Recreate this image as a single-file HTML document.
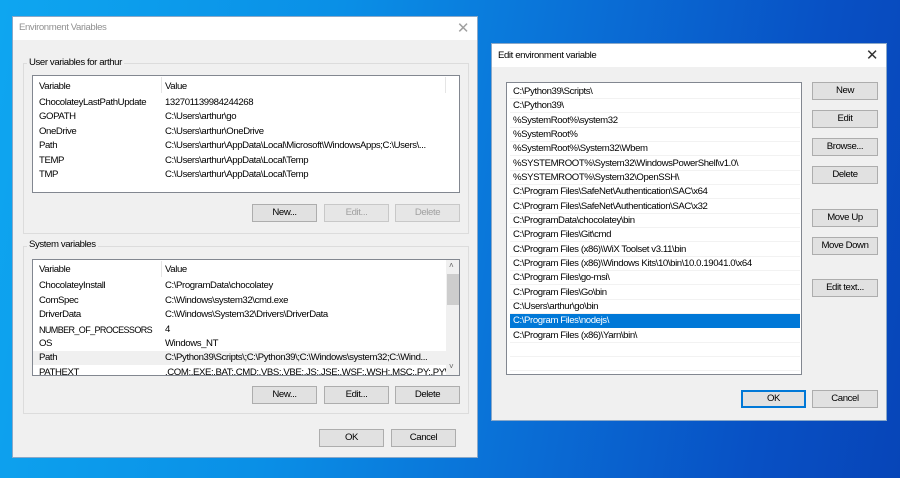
<!DOCTYPE html>
<html><head><meta charset="utf-8"><style>
*{box-sizing:border-box;margin:0;padding:0}
body{width:900px;height:478px;overflow:hidden;position:relative;font-family:"Liberation Sans",sans-serif;font-size:9.6px;letter-spacing:-0.4px;color:#000;
background:linear-gradient(100deg,#0ea6f0 0%,#0a8fe6 35%,#0a6fd6 60%,#0850c4 85%,#0745b8 100%)}
.a{position:absolute}
.dlg{position:absolute;background:#f0f0f0;border:1px solid #8aa8c8}
.tb{position:absolute;left:0;top:0;right:0;background:#fff}
.btn{position:absolute;background:#e1e1e1;border:1px solid #adadad;text-align:center;line-height:16px;height:18px}
.dis{color:#a0a0a0;background:#e6e6e6;border-color:#c8c8c8}
.grp{position:absolute;border:1px solid #dcdcdc}
.lbl{position:absolute;background:#f0f0f0;padding:0 2px;line-height:12px}
.lst{position:absolute;background:#fff;border:1px solid #828790;overflow:hidden}
.row{position:absolute;left:0;height:14px;line-height:14px;white-space:nowrap}
.r{position:absolute;left:3px;width:290px;height:14px;line-height:13px;padding-left:3px;border-bottom:1px solid #f2f2f2;white-space:nowrap}
</style></head><body>

<!-- Left dialog -->
<div class="dlg" style="left:12px;top:16px;width:466px;height:442px">
 <div class="tb" style="height:23px"><span class="a" style="left:6px;top:5px;color:#909090">Environment Variables</span>
  <span class="a" style="right:8px;top:2px;font-size:15px;color:#a0a0a0">✕</span></div>
 <div class="grp" style="left:10px;top:46px;width:446px;height:171px"></div>
 <span class="lbl" style="left:14px;top:40px">User variables for arthur</span>
 <div class="lst" style="left:19px;top:58px;width:428px;height:118px">
  <div class="a" style="left:128px;top:1px;width:1px;height:16px;background:#e5e5e5"></div>
  <div class="a" style="left:412px;top:1px;width:1px;height:16px;background:#e5e5e5"></div>
  <div class="row" style="left:6px;top:4px">Variable</div><div class="row" style="left:132px;top:4px">Value</div>
  <div class="row" style="left:6px;top:20px">ChocolateyLastPathUpdate</div><div class="row" style="left:132px;top:20px">132701139984244268</div>
  <div class="row" style="left:6px;top:34px">GOPATH</div><div class="row" style="left:132px;top:34px">C:\Users\arthur\go</div>
  <div class="row" style="left:6px;top:49px">OneDrive</div><div class="row" style="left:132px;top:49px">C:\Users\arthur\OneDrive</div>
  <div class="row" style="left:6px;top:63px">Path</div><div class="row" style="left:132px;top:63px">C:\Users\arthur\AppData\Local\Microsoft\WindowsApps;C:\Users\...</div>
  <div class="row" style="left:6px;top:78px">TEMP</div><div class="row" style="left:132px;top:78px">C:\Users\arthur\AppData\Local\Temp</div>
  <div class="row" style="left:6px;top:92px">TMP</div><div class="row" style="left:132px;top:92px">C:\Users\arthur\AppData\Local\Temp</div>
 </div>
 <div class="btn" style="left:239px;top:187px;width:65px">New...</div>
 <div class="btn dis" style="left:311px;top:187px;width:65px">Edit...</div>
 <div class="btn dis" style="left:382px;top:187px;width:65px">Delete</div>

 <div class="grp" style="left:10px;top:229px;width:446px;height:168px"></div>
 <span class="lbl" style="left:14px;top:222px">System variables</span>
 <div class="lst" style="left:19px;top:242px;width:428px;height:117px">
  <div class="a" style="left:128px;top:1px;width:1px;height:16px;background:#e5e5e5"></div>
  <div class="a" style="left:0;top:91px;width:413px;height:14px;background:#f0f0f0"></div>
  <div class="row" style="left:6px;top:3px">Variable</div><div class="row" style="left:132px;top:3px">Value</div>
  <div class="row" style="left:6px;top:19px">ChocolateyInstall</div><div class="row" style="left:132px;top:19px">C:\ProgramData\chocolatey</div>
  <div class="row" style="left:6px;top:34px">ComSpec</div><div class="row" style="left:132px;top:34px">C:\Windows\system32\cmd.exe</div>
  <div class="row" style="left:6px;top:48px">DriverData</div><div class="row" style="left:132px;top:48px">C:\Windows\System32\Drivers\DriverData</div>
  <div class="row" style="left:6px;top:63px;font-size:9px;letter-spacing:-0.6px">NUMBER_OF_PROCESSORS</div><div class="row" style="left:132px;top:63px">4</div>
  <div class="row" style="left:6px;top:77px">OS</div><div class="row" style="left:132px;top:77px">Windows_NT</div>
  <div class="row" style="left:6px;top:91px">Path</div><div class="row" style="left:132px;top:91px">C:\Python39\Scripts\;C:\Python39\;C:\Windows\system32;C:\Wind...</div>
  <div class="row" style="left:6px;top:106px">PATHEXT</div><div class="row" style="left:132px;top:106px">.COM;.EXE;.BAT;.CMD;.VBS;.VBE;.JS;.JSE;.WSF;.WSH;.MSC;.PY;.PYW</div>
  <div class="a" style="left:413px;top:0;width:14px;height:116px;background:#f0f0f0"></div>
  <div class="a" style="left:414px;top:14px;width:12px;height:31px;background:#cdcdcd"></div>
  <span class="a" style="left:416px;top:1px;font-size:8px;color:#606060">˄</span>
  <span class="a" style="left:416px;top:102px;font-size:8px;color:#606060">˅</span>
 </div>
 <div class="btn" style="left:239px;top:369px;width:65px">New...</div>
 <div class="btn" style="left:311px;top:369px;width:65px">Edit...</div>
 <div class="btn" style="left:382px;top:369px;width:65px">Delete</div>
 <div class="btn" style="left:306px;top:412px;width:65px">OK</div>
 <div class="btn" style="left:378px;top:412px;width:65px">Cancel</div>
</div>

<!-- Right dialog -->
<div class="dlg" style="left:491px;top:43px;width:396px;height:378px">
 <div class="tb" style="height:23px"><span class="a" style="left:6px;top:6px">Edit environment variable</span>
  <span class="a" style="right:8px;top:2px;font-size:15px;color:#333">✕</span></div>
 <div class="lst" style="left:14px;top:38px;width:296px;height:293px">
  <div class="r" style="top:2px">C:\Python39\Scripts\</div>
  <div class="r" style="top:16px">C:\Python39\</div>
  <div class="r" style="top:31px">%SystemRoot%\system32</div>
  <div class="r" style="top:45px">%SystemRoot%</div>
  <div class="r" style="top:59px">%SystemRoot%\System32\Wbem</div>
  <div class="r" style="top:74px">%SYSTEMROOT%\System32\WindowsPowerShell\v1.0\</div>
  <div class="r" style="top:88px">%SYSTEMROOT%\System32\OpenSSH\</div>
  <div class="r" style="top:102px">C:\Program Files\SafeNet\Authentication\SAC\x64</div>
  <div class="r" style="top:117px">C:\Program Files\SafeNet\Authentication\SAC\x32</div>
  <div class="r" style="top:131px">C:\ProgramData\chocolatey\bin</div>
  <div class="r" style="top:145px">C:\Program Files\Git\cmd</div>
  <div class="r" style="top:160px">C:\Program Files (x86)\WiX Toolset v3.11\bin</div>
  <div class="r" style="top:174px">C:\Program Files (x86)\Windows Kits\10\bin\10.0.19041.0\x64</div>
  <div class="r" style="top:188px">C:\Program Files\go-msi\</div>
  <div class="r" style="top:203px">C:\Program Files\Go\bin</div>
  <div class="r" style="top:217px">C:\Users\arthur\go\bin</div>
  <div class="r" style="top:231px;background:#0078d7;color:#fff;border:none;line-height:14px">C:\Program Files\nodejs\</div>
  <div class="r" style="top:246px">C:\Program Files (x86)\Yarn\bin\</div>
  <div class="r" style="top:260px"></div>
  <div class="r" style="top:274px"></div>
 </div>
 <div class="btn" style="left:320px;top:38px;width:66px">New</div>
 <div class="btn" style="left:320px;top:66px;width:66px">Edit</div>
 <div class="btn" style="left:320px;top:94px;width:66px">Browse...</div>
 <div class="btn" style="left:320px;top:122px;width:66px">Delete</div>
 <div class="btn" style="left:320px;top:165px;width:66px">Move Up</div>
 <div class="btn" style="left:320px;top:193px;width:66px">Move Down</div>
 <div class="btn" style="left:320px;top:235px;width:66px">Edit text...</div>
 <div class="btn" style="left:249px;top:346px;width:65px;border:2px solid #0078d7;line-height:14px">OK</div>
 <div class="btn" style="left:320px;top:346px;width:66px">Cancel</div>
</div>
</body></html>
